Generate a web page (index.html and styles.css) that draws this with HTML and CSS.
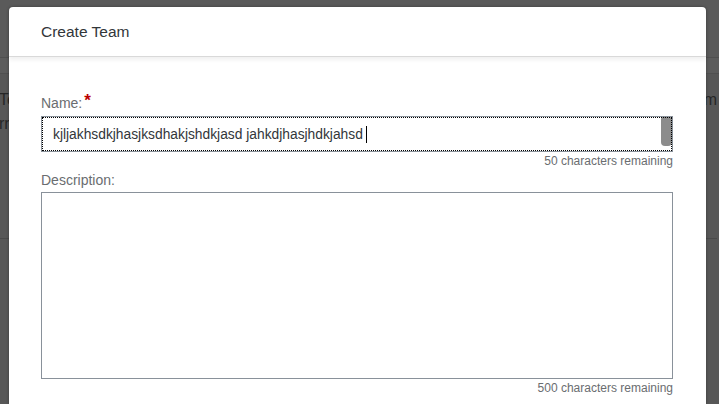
FILE: index.html
```html
<!DOCTYPE html>
<html>
<head>
<meta charset="utf-8">
<link rel="stylesheet" href="styles.css">
</head>
<body>
<div class="page">
  <div class="shell"></div>
  <div class="subbar"></div>
  <div class="content">
    <div class="row row-first"><span>Tea</span><span>Team</span></div>
    <div class="row"><span>rr</span><span></span></div>
    <div class="divider"></div>
  </div>
</div>

<div class="dialog">
  <div class="dialog-header">
    <h1 class="dialog-title">Create Team</h1>
  </div>
  <div class="dialog-body">
    <div class="field-label field-label-name">Name:<span class="req">*</span></div>
    <div class="input focused">
      <span class="input-text">kjljakhsdkjhasjksdhakjshdkjasd jahkdjhasjhdkjahsd</span><span class="caret"></span>
      <span class="thumb"></span>
    </div>
    <div class="counter">50 characters remaining</div>
    <div class="field-label field-label-desc">Description:</div>
    <div class="textarea"></div>
    <div class="counter">500 characters remaining</div>
  </div>
</div>
</body>
</html>
```

FILE: styles.css
```css
html, body {
  margin: 0;
  padding: 0;
  height: 100%;
  overflow: hidden;
}
body {
  background: #575757;
  font-family: "Liberation Sans", Arial, sans-serif;
}
.page {
  height: 100%;
}
.shell {
  height: 58px;
  background: #5a5a5a;
  border-bottom: 1px solid #4f4f4f;
  box-sizing: border-box;
}
.subbar {
  height: 16px;
  background: #5c5c5c;
  border-bottom: 1px solid #505050;
  box-sizing: border-box;
}
.content {
  padding: 0 2px 0 0;
}
.row {
  display: flex;
  justify-content: space-between;
  font-size: 16px;
  line-height: 24px;
  color: #262626;
}
.row-first {
  margin-top: 14px;
}
.row span:first-child {
  margin-left: -1px;
}
.divider {
  margin-top: 102px;
  border-top: 1px solid #4a4a4a;
}

.dialog {
  position: absolute;
  left: 9px;
  top: 7px;
  width: 697px;
  height: 397px;
  background: #fff;
  border-radius: 4px 4px 0 0;
  box-shadow: 0 0 3px rgba(0,0,0,0.35);
}
.dialog-header {
  height: 50px;
  box-sizing: border-box;
  padding-left: 32px;
  display: flex;
  align-items: center;
  border-bottom: 1px solid #d9d9d9;
  box-shadow: 0 3px 4px rgba(0,0,0,0.06);
  position: relative;
}
.dialog-title {
  margin: 0;
  font-size: 15.5px;
  font-weight: normal;
  color: #32363a;
  padding-top: 1px;
}
.dialog-body {
  padding: 36px 33px 0 32px;
  display: flex;
  flex-direction: column;
}
.field-label {
  font-size: 14px;
  line-height: 20px;
  color: #6a6d70;
}
.field-label-name {
  margin-bottom: 3px;
}
.field-label-desc {
  margin-bottom: 2px;
}
.req {
  color: #bb0000;
  font-size: 17px;
  font-weight: bold;
  margin-left: 2px;
  vertical-align: top;
  line-height: 16px;
}
.input {
  height: 36px;
  box-sizing: border-box;
  border: 1px solid #89919a;
  display: flex;
  align-items: center;
  padding-left: 11px;
  outline: 1px dotted #000;
  outline-offset: -2px;
}
.input-text {
  font-size: 13.8px;
  color: #32363a;
}
.caret {
  width: 1px;
  height: 17px;
  background: #000;
  margin-left: 3px;
}
.thumb {
  margin-left: auto;
  align-self: flex-start;
  width: 11px;
  height: 29px;
  background: #8c8c8c;
  border-radius: 2px 2px 4px 4px;
}
.counter {
  font-size: 12px;
  line-height: 18px;
  color: #6a6d70;
  text-align: right;
}
.textarea {
  height: 187px;
  box-sizing: border-box;
  border: 1px solid #89919a;
}
```
